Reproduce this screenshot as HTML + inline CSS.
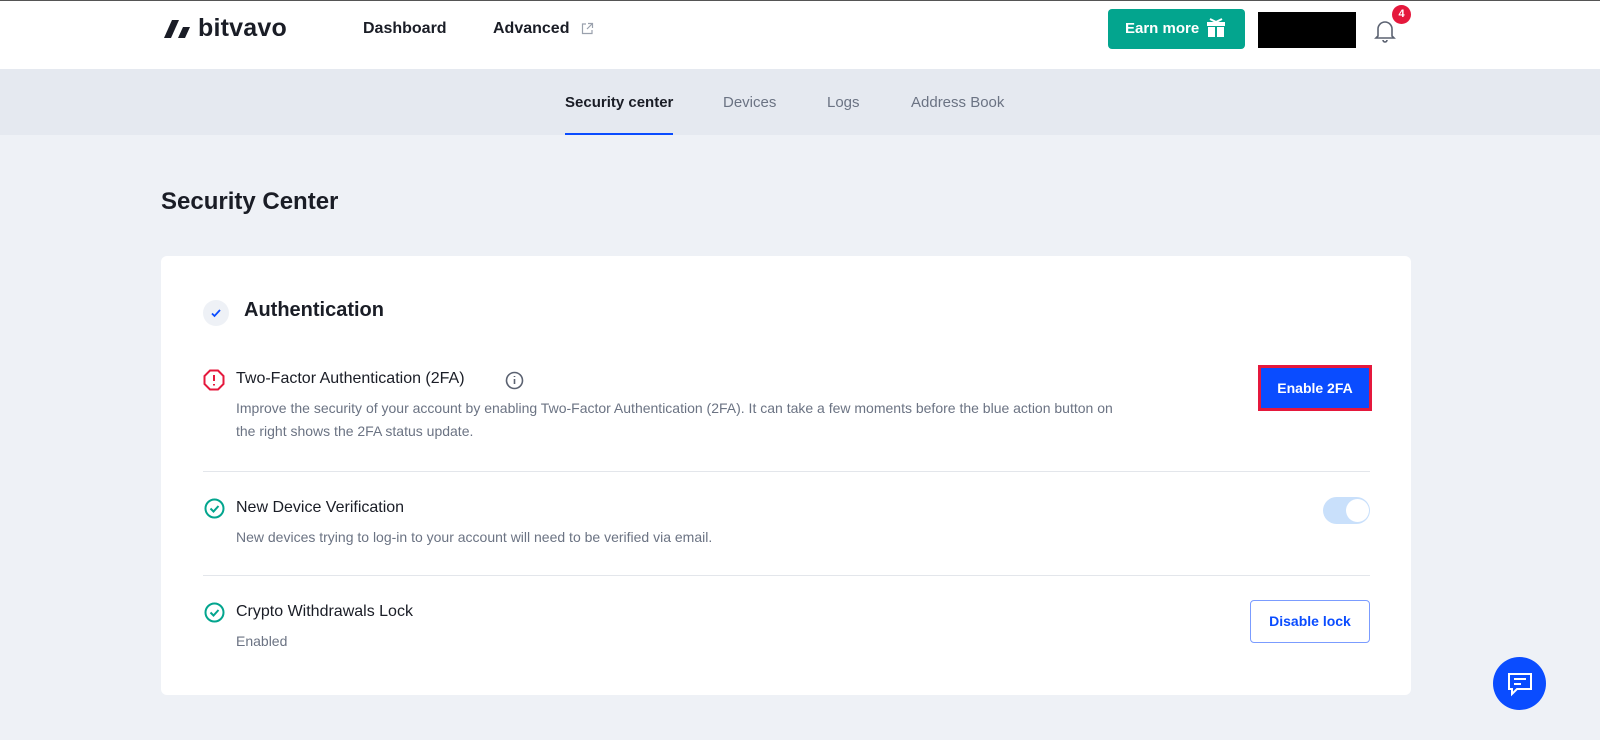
<!DOCTYPE html>
<html><head><style>
*{margin:0;padding:0;box-sizing:border-box}
body{width:1600px;height:740px;overflow:hidden;background:#eef1f6;font-family:"Liberation Sans",sans-serif;color:#1a1d26;position:relative}
.hdr{position:absolute;top:0;left:0;width:1600px;height:69px;background:#fff;border-top:1px solid #555}
.sub{position:absolute;top:69px;left:0;width:1600px;height:66px;background:#e5e9f0}
.a{position:absolute;white-space:nowrap}
.card{position:absolute;left:161px;top:256px;width:1250px;height:439px;background:#fff;border-radius:6px}
.t{font-size:16px;color:#1a1d26}
.d{font-size:14px;color:#6b7383;line-height:23px}
.hr{position:absolute;left:42px;width:1167px;height:1px;background:#e3e6eb}
</style></head><body>
<div class="hdr">
 <svg class="a" style="left:164px;top:18px" width="30" height="20" viewBox="0 0 30 20"><path d="M8 1h7L7 19H0z" fill="#1a1d26"/><path d="M19 8h7l-5 11h-7z" fill="#1a1d26"/></svg>
 <div class="a" style="left:198px;top:13px;font-size:25px;font-weight:bold;letter-spacing:0.2px">bitvavo</div>
 <div class="a" style="left:363px;top:19px;font-size:16px;font-weight:bold">Dashboard</div>
 <div class="a" style="left:493px;top:19px;font-size:16px;font-weight:bold">Advanced</div>
 <svg class="a" style="left:581px;top:21px" width="13" height="13" viewBox="0 0 13 13" fill="none" stroke="#9aa1ad" stroke-width="1.2"><path d="M5 2H1.5v9.5H11V8M7 1.5h4.5V6M11.5 1.5L6 7"/></svg>
 <div class="a" style="left:1108px;top:8px;width:137px;height:40px;background:#03a58e;border-radius:4px;color:#fff;font-weight:bold;font-size:15px;padding:11px 0 0 17px">Earn more</div>
 <svg class="a" style="left:1206px;top:17px" width="20" height="20" viewBox="0 0 20 20" fill="#fff"><rect x="1" y="4" width="18" height="4"/><rect x="2" y="9" width="7" height="10"/><rect x="11" y="9" width="7" height="10"/><path d="M4 1l6 3 6-3" stroke="#fff" stroke-width="2" fill="none"/></svg>
 <div class="a" style="left:1258px;top:11px;width:98px;height:36px;background:#000"></div>
 <svg class="a" style="left:1374px;top:18px" width="22" height="24" viewBox="0 0 22 24" fill="none" stroke="#5b6271" stroke-width="1.6"><path d="M4 17V10a7 7 0 0114 0v7l2 2H2z"/><path d="M9 21a2 2 0 004 0"/></svg>
 <div class="a" style="left:1392px;top:4px;width:19px;height:19px;border-radius:50%;background:#e5183c;color:#fff;font-size:11px;font-weight:bold;text-align:center;line-height:19px">4</div>
</div>
<div class="sub">
 <div class="a" style="left:565px;top:25px;font-size:15px;font-weight:bold">Security center</div>
 <div class="a" style="left:565px;top:64px;width:108px;height:2px;background:#0a4cff"></div>
 <div class="a" style="left:723px;top:25px;font-size:15px;color:#6b7383">Devices</div>
 <div class="a" style="left:827px;top:25px;font-size:15px;color:#6b7383">Logs</div>
 <div class="a" style="left:911px;top:25px;font-size:15px;color:#6b7383">Address Book</div>
</div>
<div class="a" style="left:161px;top:188px;font-size:24px;font-weight:bold">Security Center</div>
<div class="card">
 <div class="a" style="left:42px;top:44px;width:26px;height:26px;border-radius:50%;background:#eef1f6"></div>
 <svg class="a" style="left:49px;top:51px" width="12" height="12" viewBox="0 0 12 12" fill="none" stroke="#0a4cff" stroke-width="1.8"><path d="M2 6.5l2.5 2.5L10 3"/></svg>
 <div class="a" style="left:83px;top:43px;font-size:20px;font-weight:bold">Authentication</div>
 <svg class="a" style="left:42px;top:113px" width="22" height="22" viewBox="0 0 22 22" fill="none" stroke="#e5183c" stroke-width="2"><path d="M7 1.5h8l5.5 5.5v8L15 20.5H7L1.5 15V7z"/><path d="M11 6v6M11 15v1.5"/></svg>
 <div class="a t" style="left:75px;top:114px">Two-Factor Authentication (2FA)</div>
 <svg class="a" style="left:344px;top:115px" width="19" height="19" viewBox="0 0 19 19" fill="none" stroke="#5b6271" stroke-width="1.6"><circle cx="9.5" cy="9.5" r="8"/><path d="M9.5 8v5M9.5 5v1"/></svg>
 <div class="a d" style="left:75px;top:141px">Improve the security of your account by enabling Two-Factor Authentication (2FA). It can take a few moments before the blue action button on<br>the right shows the 2FA status update.</div>
 <div class="a" style="left:1097px;top:109px;width:114px;height:46px;border:3px solid #e5183c;background:#0a4cff;color:#fff;font-weight:bold;font-size:14px;text-align:center;line-height:40px">Enable 2FA</div>
 <div class="hr" style="top:215px"></div>
 <svg class="a" style="left:43px;top:242px" width="21" height="21" viewBox="0 0 21 21" fill="none" stroke="#03a58e" stroke-width="2"><circle cx="10.5" cy="10.5" r="9"/><path d="M6.5 10.5l3 3 5-5.5"/></svg>
 <div class="a t" style="left:75px;top:243px">New Device Verification</div>
 <div class="a d" style="left:75px;top:270px">New devices trying to log-in to your account will need to be verified via email.</div>
 <div class="a" style="left:1162px;top:241px;width:47px;height:27px;border-radius:14px;background:#c9e0fb"></div>
 <div class="a" style="left:1185px;top:243px;width:23px;height:23px;border-radius:50%;background:#fff"></div>
 <div class="hr" style="top:319px"></div>
 <svg class="a" style="left:43px;top:346px" width="21" height="21" viewBox="0 0 21 21" fill="none" stroke="#03a58e" stroke-width="2"><circle cx="10.5" cy="10.5" r="9"/><path d="M6.5 10.5l3 3 5-5.5"/></svg>
 <div class="a t" style="left:75px;top:347px">Crypto Withdrawals Lock</div>
 <div class="a d" style="left:75px;top:374px">Enabled</div>
 <div class="a" style="left:1089px;top:344px;width:120px;height:43px;border:1px solid #7b9cff;border-radius:4px;color:#0a4cff;font-size:14px;font-weight:bold;text-align:center;line-height:41px">Disable lock</div>
</div>
<div class="a" style="left:1493px;top:657px;width:53px;height:53px;border-radius:50%;background:#0a4cff"></div>
<svg class="a" style="left:1506px;top:670px" width="28" height="28" viewBox="0 0 28 28" fill="none" stroke="#fff" stroke-width="2"><path d="M3 4h22v15H11l-5 5v-5H3z"/><path d="M8 9h12M8 14h7"/></svg>
</body></html>
